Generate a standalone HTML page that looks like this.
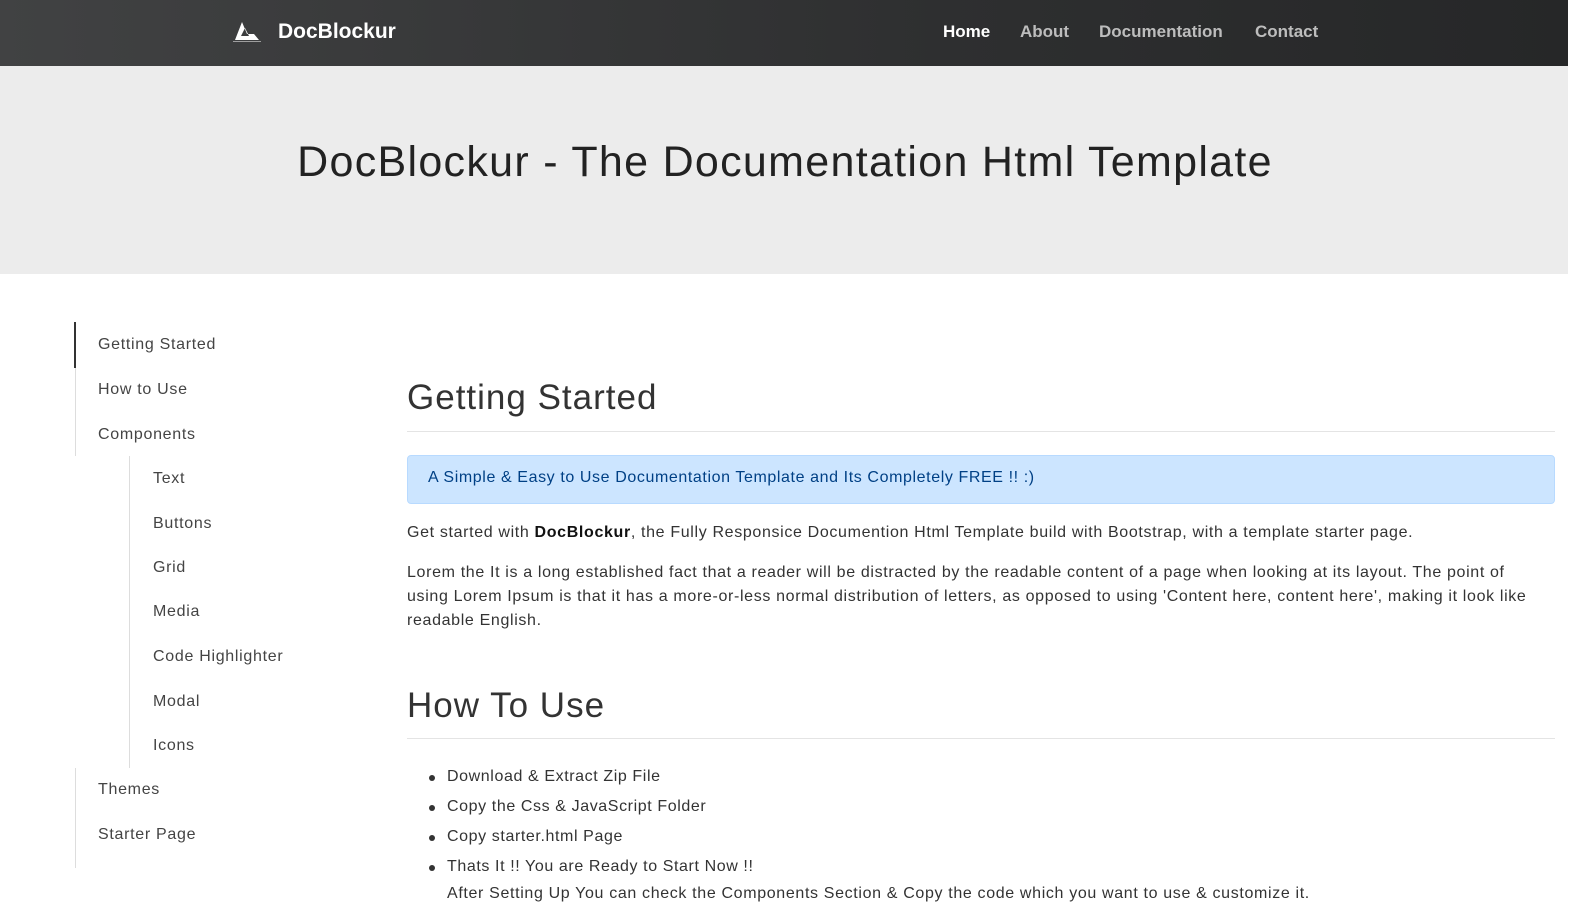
<!DOCTYPE html>
<html><head><meta charset="utf-8"><style>
*{margin:0;padding:0;box-sizing:border-box}
body{width:1581px;height:899px;overflow:hidden;background:#fff;font-family:"Liberation Sans",sans-serif;color:#222;position:relative}
.nav{position:absolute;left:0;top:0;width:1568px;height:66px;background:linear-gradient(90deg,#414243,#2e2f30 60%,#262728)}
.brand{position:absolute;left:278px;top:20px;color:#fff;font-size:21px;font-weight:bold;letter-spacing:0px}
.logo{position:absolute;left:233px;top:22px}
.nav a{position:absolute;top:22px;font-size:17px;color:#bdbdbd;font-weight:bold;text-decoration:none}
.hero{position:absolute;left:0;top:66px;width:1568px;height:208px;background:#ececec}
.hero h1{position:absolute;left:0;width:1570px;text-align:center;top:72px;font-weight:normal;font-size:43px;color:#222;letter-spacing:1.3px}
.side{position:absolute;left:74px;top:322px}
.side div{position:absolute;white-space:nowrap;font-size:16px;color:#444;letter-spacing:0.7px}
h2{position:absolute;font-weight:normal;font-size:35px;color:#333;letter-spacing:1px}
.hr{position:absolute;left:407px;width:1148px;height:1px;background:#e4e4e4}
.alert{position:absolute;left:407px;top:455px;width:1148px;height:49px;background:#cce5ff;border:1px solid #b8daff;border-radius:4px;color:#004085;font-size:16px;padding:13px 20px;letter-spacing:0.6px}
p{position:absolute;left:407px;width:1150px;font-size:16px;line-height:24px;color:#333;letter-spacing:0.65px}
li{position:absolute;left:447px;font-size:16px;list-style:none;color:#333;letter-spacing:0.6px;white-space:nowrap}
li:before{content:"";position:absolute;left:-18px;top:7px;width:6px;height:6px;border-radius:50%;background:#333}
</style></head><body>
<div class="nav">
<svg class="logo" width="28" height="20" viewBox="0 0 28 20"><path d="M9 0 L2 18 L26 18 L21 12 L14 12 Z M12 6 L16 14 L8 14 Z" fill="#fff" fill-rule="evenodd"/><path d="M0 20 L28 20" stroke="#fff" stroke-width="1"/></svg>
<div class="brand">DocBlockur</div>
<a style="left:943px;color:#fff">Home</a>
<a style="left:1020px">About</a>
<a style="left:1099px">Documentation</a>
<a style="left:1255px">Contact</a>
</div>
<div class="hero"><h1>DocBlockur - The Documentation Html Template</h1></div>
<div style="position:absolute;left:74px;top:322px;width:2px;height:46px;background:#333"></div>
<div style="position:absolute;left:75px;top:368px;width:1px;height:88px;background:#ddd"></div>
<div style="position:absolute;left:129px;top:456px;width:1px;height:312px;background:#ddd"></div>
<div style="position:absolute;left:75px;top:768px;width:1px;height:100px;background:#ddd"></div>
<div class="side">
<div style="left:24px;top:14px">Getting Started</div>
<div style="left:24px;top:59px">How to Use</div>
<div style="left:24px;top:104px">Components</div>
<div style="left:79px;top:148px">Text</div>
<div style="left:79px;top:193px">Buttons</div>
<div style="left:79px;top:237px">Grid</div>
<div style="left:79px;top:281px">Media</div>
<div style="left:79px;top:326px">Code Highlighter</div>
<div style="left:79px;top:371px">Modal</div>
<div style="left:79px;top:415px">Icons</div>
<div style="left:24px;top:459px">Themes</div>
<div style="left:24px;top:504px">Starter Page</div>
</div>
<h2 style="left:407px;top:378px">Getting Started</h2>
<div class="hr" style="top:431px"></div>
<div class="alert">A Simple &amp; Easy to Use Documentation Template and Its Completely FREE !! :)</div>
<p style="top:521px">Get started with <b style="color:#111">DocBlockur</b>, the Fully Responsice Documention Html Template build with Bootstrap, with a template starter page.</p>
<p style="top:561px">Lorem the It is a long established fact that a reader will be distracted by the readable content of a page when looking at its layout. The point of<br>using Lorem Ipsum is that it has a more-or-less normal distribution of letters, as opposed to using 'Content here, content here', making it look like<br>readable English.</p>
<h2 style="left:407px;top:686px">How To Use</h2>
<div class="hr" style="top:738px"></div>
<ul>
<li style="top:768px">Download &amp; Extract Zip File</li>
<li style="top:798px">Copy the Css &amp; JavaScript Folder</li>
<li style="top:828px">Copy starter.html Page</li>
<li style="top:858px">Thats It !! You are Ready to Start Now !!</li>
</ul>
<p style="top:882px;left:447px">After Setting Up You can check the Components Section &amp; Copy the code which you want to use &amp; customize it.</p>
</body></html>
